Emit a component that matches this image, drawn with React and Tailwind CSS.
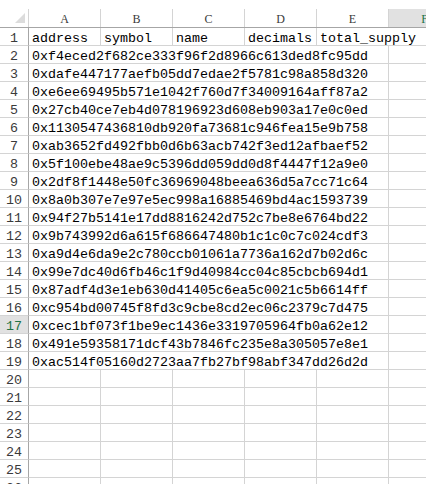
import React from "react";

const data = [
  "0xf4eced2f682ce333f96f2d8966c613ded8fc95dd",
  "0xdafe447177aefb05dd7edae2f5781c98a858d320",
  "0xe6ee69495b571e1042f760d7f34009164aff87a2",
  "0x27cb40ce7eb4d078196923d608eb903a17e0c0ed",
  "0x1130547436810db920fa73681c946fea15e9b758",
  "0xab3652fd492fbb0d6b63acb742f3ed12afbaef52",
  "0x5f100ebe48ae9c5396dd059dd0d8f4447f12a9e0",
  "0x2df8f1448e50fc36969048beea636d5a7cc71c64",
  "0x8a0b307e7e97e5ec998a16885469bd4ac1593739",
  "0x94f27b5141e17dd8816242d752c7be8e6764bd22",
  "0x9b743992d6a615f686647480b1c1c0c7c024cdf3",
  "0xa9d4e6da9e2c780ccb01061a7736a162d7b02d6c",
  "0x99e7dc40d6fb46c1f9d40984cc04c85cbcb694d1",
  "0x87adf4d3e1eb630d41405c6ea5c0021c5b6614ff",
  "0xc954bd00745f8fd3c9cbe8cd2ec06c2379c7d475",
  "0xcec1bf073f1be9ec1436e3319705964fb0a62e12",
  "0x491e59358171dcf43b7846fc235e8a305057e8e1",
  "0xac514f05160d2723aa7fb27bf98abf347dd26d2d",
];

const headers = ["address", "symbol", "name", "decimals"];
const cols = ["A", "B", "C", "D", "E"];

function RowNum({ n }) {
  const sel = n === 17;
  return (
    <div
      className={
        "w-[29px] shrink-0 h-[18px] box-border border-r border-r-[#a6a6a6] border-b border-b-[#d4d4d4] flex justify-center pt-[2px] leading-[17px] " +
        (sel ? "bg-[#e1e1e1] text-[#217346]" : "text-[#3a3a3a]")
      }
    >
      {n}
    </div>
  );
}

export default function App() {
  const rows = [];
  for (let n = 1; n <= 26; n++) {
    let cells;
    if (n === 1) {
      cells = [
        ...headers.map((h) => (
          <div
            key={h}
            className="w-[72px] shrink-0 h-[18px] box-border border-r border-b border-[#d4d4d4] pl-[3px] pt-[2px] leading-[17px] whitespace-nowrap overflow-hidden"
          >
            {h}
          </div>
        )),
        <div
          key="ts"
          className="w-[144px] shrink-0 h-[18px] box-border border-r border-b border-[#d4d4d4] pl-[3px] pt-[2px] leading-[17px] whitespace-nowrap overflow-hidden"
        >
          total_supply
        </div>,
      ];
    } else if (n <= 19) {
      cells = [
        <div
          key="a"
          className="w-[360px] shrink-0 h-[18px] box-border border-r border-b border-[#d4d4d4] pl-[3px] pt-[2px] leading-[17px] whitespace-nowrap overflow-hidden"
        >
          {data[n - 2]}
        </div>,
        <div key="f" className="w-[72px] shrink-0 h-[18px] box-border border-r border-b border-[#d4d4d4]" />,
      ];
    } else {
      cells = [...cols, "F"].map((c) => (
        <div
          key={c}
          className="w-[72px] shrink-0 h-[18px] box-border border-r border-b border-[#d4d4d4]"
        />
      ));
    }
    rows.push(
      <div key={n} className="flex">
        <RowNum n={n} />
        {cells}
      </div>
    );
  }

  return (
    <div
      className="w-[426px] h-[484px] overflow-hidden bg-white text-black text-[13.33px]"
      style={{ fontFamily: '"Liberation Mono", "Noto Sans CJK SC", monospace' }}
    >
      <div className="h-[9px]" />
      <div
        className="flex h-[18px] border-b border-[#a6a6a6] box-content"
        style={{ fontFamily: '"Liberation Serif", serif' }}
      >
        <div className="w-[29px] shrink-0 h-[18px] box-border border-r border-[#d4d4d4] relative">
          <svg className="absolute left-0 top-0" width="28" height="18" viewBox="0 0 28 18">
            <polygon points="25,4 25,14 15,14" fill="#dcdcdc" />
          </svg>
        </div>
        {cols.map((c) => (
          <div
            key={c}
            className="w-[72px] shrink-0 h-[18px] box-border border-r border-[#d4d4d4] flex justify-center items-end pb-[2px] text-[12px] leading-[12px] text-[#3a3a3a]"
          >
            {c}
          </div>
        ))}
        <div className="w-[72px] shrink-0 h-[18px] box-border border-r border-[#d4d4d4] bg-[#e1e1e1] flex justify-center items-end pb-[2px] text-[12px] leading-[12px] text-[#217346]">
          F
        </div>
      </div>
      {rows}
    </div>
  );
}
